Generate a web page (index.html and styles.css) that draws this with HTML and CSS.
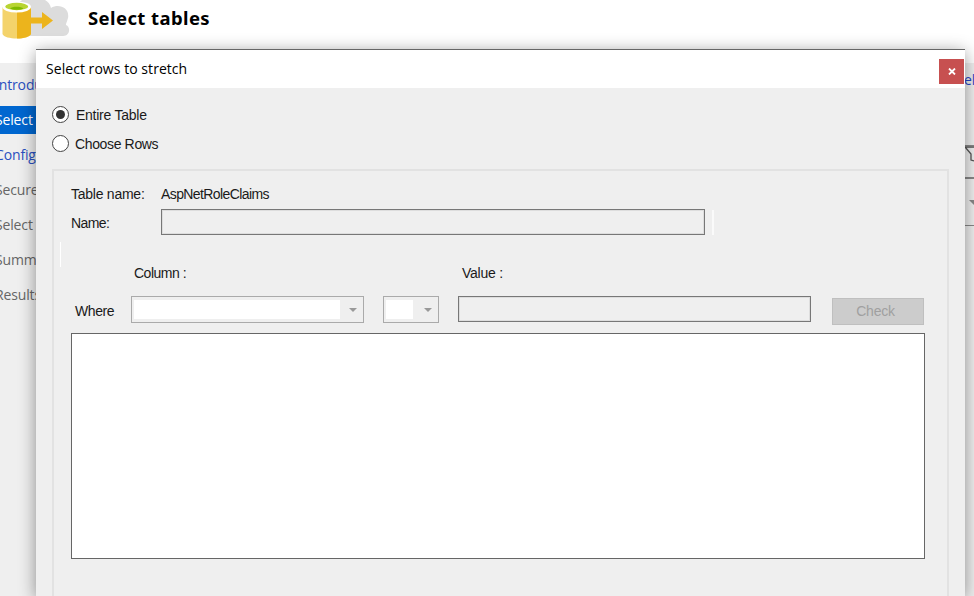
FILE: index.html
```html
<!DOCTYPE html>
<html lang="en">
<head>
    <meta charset="UTF-8">
    <meta name="viewport" content="width=device-width, initial-scale=1.0">
    <title>Select tables</title>
    <link rel="stylesheet" href="styles.css">
</head>
<body>
    <div class="wizard">
        <header class="header">
            <svg class="logo" width="72" height="42" viewBox="0 0 72 42">
                <path d="M17 36V8C18 3 21-1 28-2h13c5 2 9 5 10 10 8-5 19 0 17 10-1 4-2 5-2 7 5 2 4 11-3 11z" fill="#dcdcdc"/>
                <path d="M2.500 7v27c2 6 26.500 6 28.500 0V7z" fill="#f4d36b"/>
                <path d="M17 7v31.500c7 0 13-2 14-4.500V7z" fill="#ecb41c"/>
                <ellipse cx="16.700" cy="7" rx="14.300" ry="5.500" fill="#fff"/>
                <ellipse cx="16.700" cy="6.500" rx="11.500" ry="3.700" fill="#b8d432"/>
                <path d="M10 8.500c2-2.200 11-2.200 13.500 0-2 1.800-11 1.800-13.500 0z" fill="#7fba00"/>
                <path d="M31 17.500h11V12l11 8.500L42 29v-5.500H31z" fill="#ecb41c"/>
            </svg>
            <h1>Select tables</h1>
        </header>
        <div class="body">
            <nav class="steps">
                <div class="step link">Introduction</div>
                <div class="step current">Select tables</div>
                <div class="step link">Configure</div>
                <div class="step">Secure</div>
                <div class="step">Select</div>
                <div class="step">Summary</div>
                <div class="step">Results</div>
            </nav>
            <div class="strip">
                <div class="help">el</div>
                <div class="filter">
                    <svg width="9" height="17" viewBox="0 0 9 17"><path d="M0 1h14M0 1l6 7v6l3 1" fill="none" stroke="#555" stroke-width="1.300"/></svg>
                </div>
                <div class="drop">
                    <svg width="5" height="6" viewBox="0 0 5 6"><path d="M0 0h10L5 5z" fill="#888"/></svg>
                </div>
            </div>
        </div>
    </div>

    <div class="dialog">
        <div class="titlebar">
            <span class="title">Select rows to stretch</span>
            <button class="close" aria-label="Close">
                <svg width="8" height="7" viewBox="0 0 8 7"><path d="M1 .5l6 6M7 .5l-6 6" stroke="#fff" stroke-width="1.800"/></svg>
            </button>
        </div>
        <div class="options">
            <label class="option"><span class="radio checked"></span><span class="t-entire">Entire Table</span></label>
            <label class="option"><span class="radio"></span><span class="t-choose">Choose Rows</span></label>
        </div>
        <div class="group">
            <div class="row row-table"><span class="label t-table">Table name:</span><span class="t-value">AspNetRoleClaims</span></div>
            <div class="row row-name"><span class="label t-name">Name:</span><span class="box name-box"></span><span class="caret"></span></div>
            <div class="caret caret-left"></div>
            <div class="row heads"><span class="t-column">Column :</span><span class="t-val">Value :</span></div>
            <div class="row where">
                <span class="t-where">Where</span>
                <span class="combo column"><span class="field"></span><span class="arrow"></span></span>
                <span class="combo operator"><span class="field"></span><span class="arrow"></span></span>
                <span class="box value-box"></span>
                <button class="check" disabled>Check</button>
            </div>
            <div class="preview"></div>
        </div>
    </div>
</body>
</html>
```
FILE: styles.css
```css
* { box-sizing: border-box; }
body { margin: 0; width: 974px; height: 596px; overflow: hidden; background: #fff; font-family: "Liberation Sans", Arial, sans-serif; font-size: 14px; color: #1a1a1a; }
span, button { white-space: nowrap; }

/* wizard behind the dialog */
.header { display: flex; height: 63px; }
.logo { flex: none; }
h1 { margin: 6px 0 0 16px; font: bold 18.5px/24px "Noto Sans", sans-serif; letter-spacing: 0.4px; color: #000; }
.body { display: flex; justify-content: space-between; height: 533px; background: #efefef; }
.steps { width: 36px; padding-top: 8px; overflow: hidden; }
.step { width: 140px; height: 28px; margin-bottom: 7px; text-indent: -5px; font: 14px/28px "Open Sans", sans-serif; letter-spacing: -0.15px; color: #666; }
.step.link { color: #2a50c0; }
.step.current { background: #0067d0; color: #fff; }
.strip { width: 9px; overflow: hidden; }
.help { height: 82px; padding-top: 7px; text-indent: -1px; font: 14px/20px "Open Sans", sans-serif; color: #2546c8; }
.filter { height: 34px; border-top: 1px solid #888; border-bottom: 2px solid #888; }
.drop { height: 47px; padding: 21px 0 0 4px; border-bottom: 1px solid #888; }
.drop svg, .filter svg { display: block; }

/* dialog */
.dialog { position: absolute; left: 36px; top: 49px; width: 929px; height: 547px; border-top: 1px solid #666; background: #efefef; box-shadow: 0 3px 16px rgba(0,0,0,0.42); }
.titlebar { display: flex; justify-content: space-between; height: 38px; padding: 0 1px 0 10px; background: #fff; }
.title { font: 14px/38px "Open Sans", sans-serif; letter-spacing: 0.05px; color: #000; }
.close { display: flex; align-items: center; justify-content: center; width: 25px; height: 25px; margin-top: 9px; padding: 0; border: 0; background: #c75050; }
.options { height: 81px; padding: 12px 0 0 16px; }
.option { display: flex; align-items: center; height: 29px; gap: 7px; }
.radio { display: flex; align-items: center; justify-content: center; width: 17px; height: 17px; border: 1px solid #444; border-radius: 50%; background: #fff; }
.radio.checked::after { content: ""; width: 9px; height: 9px; border-radius: 50%; background: #333; }
.t-entire { letter-spacing: -0.25px; }
.t-choose { margin-left: -1px; letter-spacing: -0.36px; }

.group { width: 897px; height: 427px; margin-left: 16px; padding: 13px 0 0 17px; border: 2px solid #e2e2e2; border-bottom: 0; }
.row { display: flex; align-items: center; }
.row-table { height: 19px; }
.row-name { height: 26px; margin-top: 6px; }
.label { width: 90px; }
.t-table { letter-spacing: -0.25px; }
.t-value { letter-spacing: -0.6px; }
.t-name { padding-top: 2px; letter-spacing: -0.6px; }
.box { height: 26px; border: 1px solid #777; box-shadow: inset 0 0 0 1px #ddd; }
.name-box { width: 544px; }
.caret { width: 2px; height: 25px; margin-left: 7px; background: #fafafa; }
.caret-left { width: 1px; margin: 7px 0 0 -11px; background: #fff; }
.heads { height: 16px; margin-top: -2px; padding-left: 63px; }
.t-column { width: 52px; letter-spacing: -0.5px; }
.t-val { margin-left: 276px; letter-spacing: -0.25px; }
.where { height: 27px; margin-top: 15px; }
.where .t-where { width: 60px; padding: 3px 0 0 4px; letter-spacing: -0.4px; }
.combo { display: flex; justify-content: space-between; height: 27px; padding: 3px 6px 3px 2px; border: 1px solid #aaa; }
.column { width: 233px; }
.operator { width: 56px; margin-left: 19px; }
.field { background: #fff; }
.column .field { width: 206px; }
.operator .field { width: 27px; }
.arrow { align-self: center; border: 4px solid transparent; border-top-color: #999; border-bottom: 0; }
.value-box { width: 353px; margin: -1px 0 0 19px; }
.check { width: 92px; height: 27px; margin: 3px 0 0 21px; padding: 0 5px 0 0; border: 1px solid #bfbfbf; background: #ccc; font: 14px "Liberation Sans", Arial, sans-serif; letter-spacing: -0.2px; color: #a0a0a0; }
.preview { width: 854px; height: 226px; margin-top: 10px; border: 1px solid #666; background: #fff; }
```
